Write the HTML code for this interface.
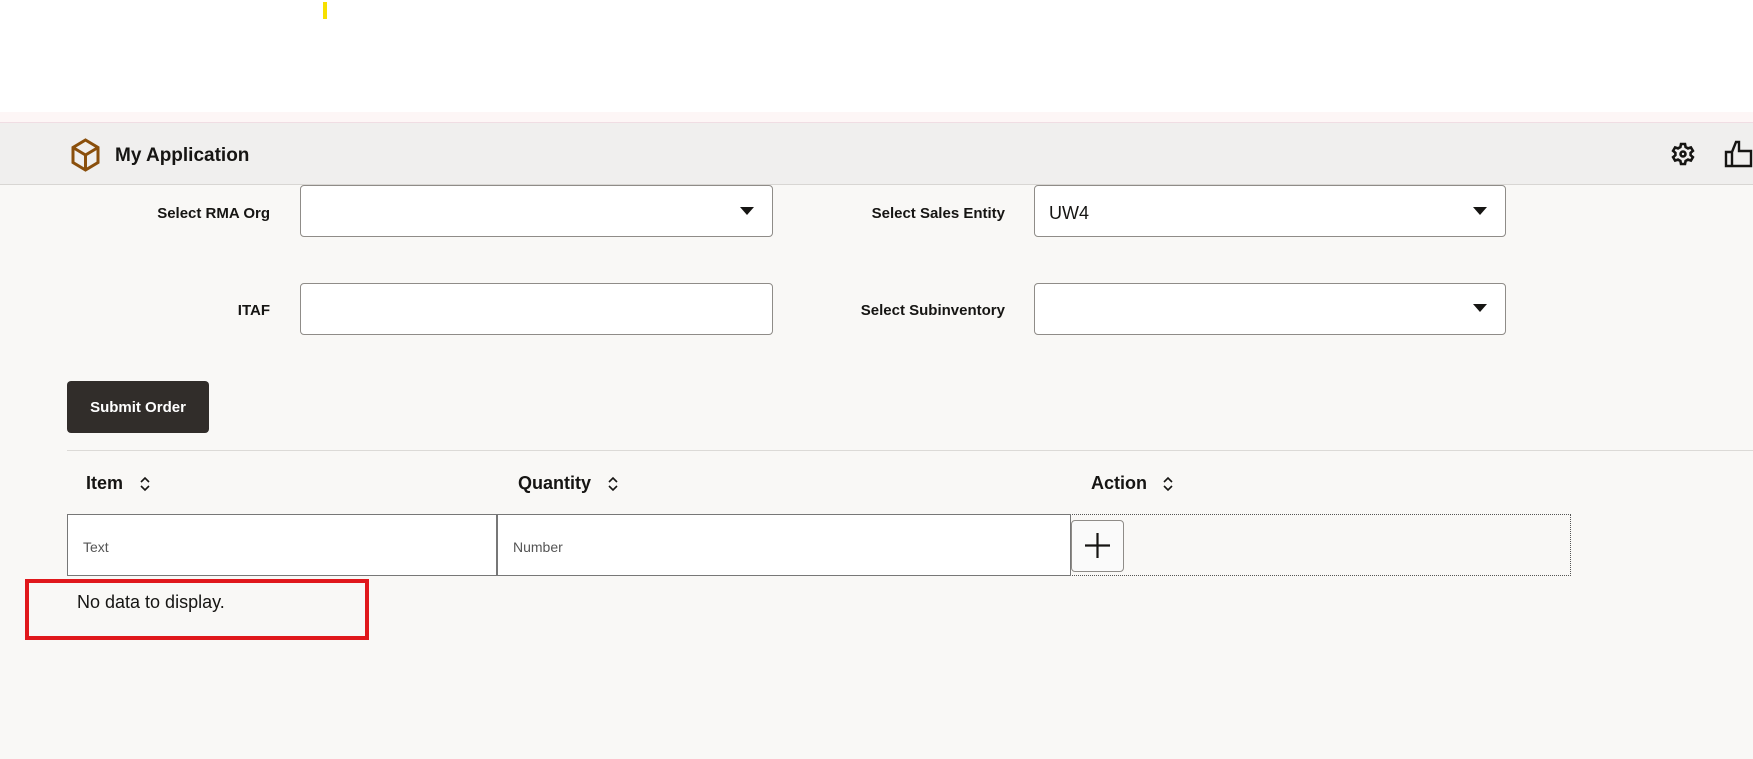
<!DOCTYPE html>
<html><head><meta charset="utf-8"><style>
*{box-sizing:border-box;margin:0;padding:0}
body{width:1753px;height:759px;background:#f9f8f6;font-family:"Liberation Sans",sans-serif;color:#161513;position:relative;overflow:hidden}
.abs{position:absolute}
.top{left:0;top:0;width:1753px;height:112px;background:#fff}
.pink{left:0;top:112px;width:1753px;height:11px;background:#fdf6f6;border-bottom:1px solid #f0dde3}
.hdr{left:0;top:123px;width:1753px;height:62px;background:#f0efee;border-bottom:1px solid #d8d6d3}
.lbl{font-size:15px;font-weight:bold;text-align:right;width:250px}
.box{background:#fff;border:1px solid #8f8c88;border-radius:4px}
.tri{width:0;height:0;border-left:7px solid transparent;border-right:7px solid transparent;border-top:8px solid #161513}
.th{font-size:18px;font-weight:bold;top:473px}
</style></head><body>
<div class="abs top"></div>
<div class="abs" style="left:323px;top:2px;width:4px;height:17px;background:#f7e000"></div>
<div class="abs pink"></div>
<div class="abs hdr"></div>
<svg class="abs" style="left:70px;top:138px" width="31" height="34" viewBox="0 0 31 34"><g fill="none" stroke="#8a4f0c" stroke-width="3"><path d="M15.5 2 L28 9.5 V24.5 L15.5 32 L3 24.5 V9.5 Z"/><path d="M3 9.5 L15.5 17 L28 9.5 M15.5 17 V32"/></g></svg>
<div class="abs" style="left:115px;top:145px;font-size:19px;font-weight:bold">My Application</div>
<svg class="abs" style="left:1671px;top:142px" width="24" height="24" viewBox="0 0 24 24"><g fill="none" stroke="#161513" stroke-width="2.6"><path d="M10 2h4l.6 3 2.4 1.4 2.9-1 2 3.4-2.3 2v2.4l2.3 2-2 3.4-2.9-1L14.6 19 14 22h-4l-.6-3L7 17.6l-2.9 1-2-3.4 2.3-2v-2.4l-2.3-2 2-3.4 2.9 1L9.4 5z"/><circle cx="12" cy="12" r="2.5"/></g></svg>
<svg class="abs" style="left:1724px;top:140px" width="29" height="28" viewBox="0 0 29 28"><g fill="none" stroke="#161513" stroke-width="2.4"><path d="M2 12h6v14H2z M8 12 L12 2 h3 v9 h12 v15 H8"/></g></svg>

<div class="abs lbl" style="left:20px;top:205px">Select RMA Org</div>
<div class="abs box" style="left:300px;top:185px;width:473px;height:52px"></div>
<div class="abs tri" style="left:740px;top:207px"></div>
<div class="abs lbl" style="left:20px;top:302px">ITAF</div>
<div class="abs box" style="left:300px;top:283px;width:473px;height:52px"></div>

<div class="abs lbl" style="left:755px;top:205px">Select Sales Entity</div>
<div class="abs box" style="left:1034px;top:185px;width:472px;height:52px"></div>
<div class="abs" style="left:1049px;top:203px;font-size:18px">UW4</div>
<div class="abs tri" style="left:1473px;top:207px"></div>
<div class="abs lbl" style="left:755px;top:302px">Select Subinventory</div>
<div class="abs box" style="left:1034px;top:283px;width:472px;height:52px"></div>
<div class="abs tri" style="left:1473px;top:304px"></div>

<div class="abs" style="left:67px;top:381px;width:142px;height:52px;background:#312d2a;border-radius:4px;color:#fff;font-size:15px;font-weight:bold;text-align:center;line-height:54px">Submit Order</div>
<div class="abs" style="left:67px;top:450px;width:1686px;height:1px;background:#dcdad7"></div>

<div class="abs th" style="left:86px">Item</div>
<div class="abs th" style="left:518px">Quantity</div>
<div class="abs th" style="left:1091px">Action</div>
<svg class="abs" style="left:139px;top:475px" width="12" height="18" viewBox="0 0 12 18"><path d="M2 7l4-4 4 4M2 11l4 4 4-4" fill="none" stroke="#161513" stroke-width="1.6"/></svg>
<svg class="abs" style="left:607px;top:475px" width="12" height="18" viewBox="0 0 12 18"><path d="M2 7l4-4 4 4M2 11l4 4 4-4" fill="none" stroke="#161513" stroke-width="1.6"/></svg>
<svg class="abs" style="left:1162px;top:475px" width="12" height="18" viewBox="0 0 12 18"><path d="M2 7l4-4 4 4M2 11l4 4 4-4" fill="none" stroke="#161513" stroke-width="1.6"/></svg>

<div class="abs" style="left:67px;top:514px;width:1504px;height:62px;border:1px dotted #555"></div>
<div class="abs" style="left:67px;top:514px;width:430px;height:62px;background:#fff;border:1px solid #777"></div>
<div class="abs" style="left:83px;top:539px;font-size:14px;color:#555">Text</div>
<div class="abs" style="left:497px;top:514px;width:574px;height:62px;background:#fff;border:1px solid #777"></div>
<div class="abs" style="left:513px;top:539px;font-size:14px;color:#555">Number</div>
<div class="abs" style="left:1071px;top:520px;width:53px;height:52px;border:1px solid #8f8c88;border-radius:4px;background:#fafafa"></div>
<svg class="abs" style="left:1084px;top:532px" width="27" height="27" viewBox="0 0 27 27"><path d="M13.5 1v25M1 13.5h25" stroke="#161513" stroke-width="2.2"/></svg>

<div class="abs" style="left:25px;top:579px;width:344px;height:61px;border:4px solid #e0181c"></div>
<div class="abs" style="left:77px;top:592px;font-size:18px">No data to display.</div>
</body></html>
